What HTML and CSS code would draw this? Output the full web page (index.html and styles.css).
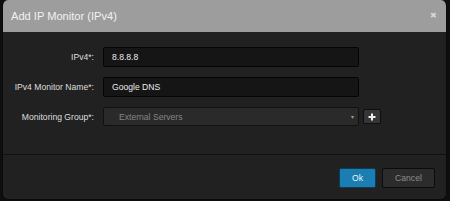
FILE: index.html
```html
<!DOCTYPE html>
<html>
<head>
<meta charset="utf-8">
<link rel="stylesheet" href="styles.css">
</head>
<body>
<div class="dialog">
  <div class="header">
    <span class="title">Add IP Monitor (IPv4)</span>
    <span class="close">&#x2716;</span>
  </div>
  <div class="body">
    <div class="form">
      <label class="label">IPv4*:</label>
      <div class="input">8.8.8.8</div>
      <label class="label">IPv4 Monitor Name*:</label>
      <div class="input">Google DNS</div>
      <label class="label">Monitoring Group*:</label>
      <div class="group-row">
        <div class="select"><span>External Servers</span><span class="caret">&#9662;</span></div>
        <div class="plus"><svg width="10" height="10" viewBox="0 0 10 10"><path d="M5 1.5V8.5M1.5 5H8.5" stroke="#ececec" stroke-width="2"/></svg></div>
      </div>
    </div>
  </div>
  <div class="footer">
    <button class="btn ok">Ok</button>
    <button class="btn cancel">Cancel</button>
  </div>
</div>
</body>
</html>
```
FILE: styles.css
```css
html, body {
  margin: 0;
  padding: 0;
  background: #0e0e0f;
  width: 450px;
  height: 201px;
  overflow: hidden;
  font-family: "Liberation Sans", Arial, sans-serif;
}
.dialog {
  margin-left: 2px;
  width: 443px;
  height: 199px;
  border: 1px solid #0a0a0a;
  border-top: none;
  border-radius: 6px;
  background: #212122;
  overflow: hidden;
  display: flex;
  flex-direction: column;
}
.header {
  height: 32px;
  background: #9d9d9d;
  display: flex;
  align-items: center;
  justify-content: space-between;
  padding: 0 9px 0 8px;
  box-sizing: border-box;
}
.title {
  color: #f2f2f2;
  font-size: 11.1px;
  margin-top: -1px;
}
.close {
  color: #d8d8d8;
  font-size: 8px;
  margin-top: -2px;
}
.body {
  height: 123px;
  padding-top: 15px;
  box-sizing: border-box;
  border-bottom: 1px solid #111112;
}
.form {
  display: grid;
  grid-template-columns: 91px 280px;
  column-gap: 9px;
  row-gap: 10px;
  align-items: center;
  font-size: 8.6px;
}
.label {
  text-align: right;
  color: #dedede;
}
.input {
  width: 256px;
  height: 20px;
  box-sizing: border-box;
  background: #151516;
  border: 1px solid #050505;
  border-radius: 2px;
  color: #ececec;
  padding-left: 8px;
  display: flex;
  align-items: center;
}
.group-row {
  display: flex;
  align-items: center;
  gap: 4px;
}
.select {
  width: 256px;
  flex: none;
  height: 19px;
  box-sizing: border-box;
  background: #2a2a2b;
  border: 1px solid #111;
  border-radius: 2px;
  color: #858585;
  padding: 0 4px 0 15px;
  display: flex;
  align-items: center;
  justify-content: space-between;
}
.caret {
  font-size: 6px;
  color: #9a9a9a;
}
.plus {
  flex: none;
  width: 18px;
  height: 15px;
  box-sizing: border-box;
  background: #353537;
  border: 1px solid #0e0e0e;
  border-radius: 2px;
  display: flex;
  align-items: center;
  justify-content: center;
}
.plus svg {
  display: block;
}
.footer {
  flex: 1;
  display: flex;
  justify-content: flex-end;
  align-items: flex-start;
  gap: 6px;
  padding: 13px 11px 0 0;
}
.btn {
  height: 20px;
  margin: 0;
  padding: 0;
  font-family: "Liberation Sans", Arial, sans-serif;
  font-size: 8.6px;
  border-radius: 2px;
  cursor: pointer;
}
.ok {
  width: 37px;
  background: #1a7eb3;
  border: 1px solid #0b3d58;
  color: #f2f2f2;
}
.cancel {
  width: 53px;
  background: #2c2c2d;
  border: 1px solid #0c0c0c;
  color: #8c8c8c;
}
```
